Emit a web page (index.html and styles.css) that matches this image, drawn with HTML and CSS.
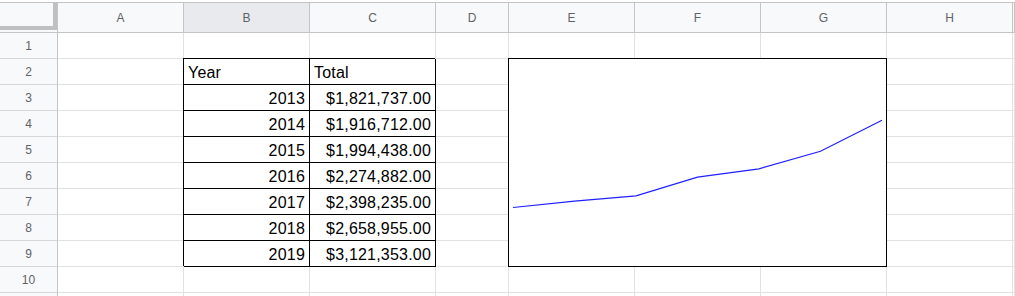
FILE: index.html
```html
<!DOCTYPE html>
<html lang="en">
<head>
    <meta charset="UTF-8">
    <title>Sheet - Totals by Year</title>
    <link rel="stylesheet" href="styles.css">
</head>
<body>
    <div class="sheet">
        <div class="row head">
            <div class="corner"><div class="freeze"></div></div>
            <div class="cell">A</div>
            <div class="cell selected">B</div>
            <div class="cell">C</div>
            <div class="cell narrow">D</div>
            <div class="cell">E</div>
            <div class="cell">F</div>
            <div class="cell">G</div>
            <div class="cell">H</div>
            <div class="cell rest"></div>
        </div>

        <div class="row">
            <div class="rh">1</div>
            <div class="cell"></div><div class="cell"></div><div class="cell"></div><div class="cell narrow"></div>
            <div class="cell"></div><div class="cell"></div><div class="cell"></div><div class="cell"></div><div class="cell rest"></div>
        </div>
        <div class="row">
            <div class="rh">2</div>
            <div class="cell"></div>
            <div class="cell data">Year</div>
            <div class="cell data">Total</div>
            <div class="cell narrow"></div>
            <div class="cell"></div><div class="cell"></div><div class="cell"></div><div class="cell"></div><div class="cell rest"></div>
        </div>
        <div class="row">
            <div class="rh">3</div>
            <div class="cell"></div>
            <div class="cell data num">2013</div>
            <div class="cell data num">$1,821,737.00</div>
            <div class="cell narrow"></div>
            <div class="cell"></div><div class="cell"></div><div class="cell"></div><div class="cell"></div><div class="cell rest"></div>
        </div>
        <div class="row">
            <div class="rh">4</div>
            <div class="cell"></div>
            <div class="cell data num">2014</div>
            <div class="cell data num">$1,916,712.00</div>
            <div class="cell narrow"></div>
            <div class="cell"></div><div class="cell"></div><div class="cell"></div><div class="cell"></div><div class="cell rest"></div>
        </div>
        <div class="row">
            <div class="rh">5</div>
            <div class="cell"></div>
            <div class="cell data num">2015</div>
            <div class="cell data num">$1,994,438.00</div>
            <div class="cell narrow"></div>
            <div class="cell"></div><div class="cell"></div><div class="cell"></div><div class="cell"></div><div class="cell rest"></div>
        </div>
        <div class="row">
            <div class="rh">6</div>
            <div class="cell"></div>
            <div class="cell data num">2016</div>
            <div class="cell data num">$2,274,882.00</div>
            <div class="cell narrow"></div>
            <div class="cell"></div><div class="cell"></div><div class="cell"></div><div class="cell"></div><div class="cell rest"></div>
        </div>
        <div class="row">
            <div class="rh">7</div>
            <div class="cell"></div>
            <div class="cell data num">2017</div>
            <div class="cell data num">$2,398,235.00</div>
            <div class="cell narrow"></div>
            <div class="cell"></div><div class="cell"></div><div class="cell"></div><div class="cell"></div><div class="cell rest"></div>
        </div>
        <div class="row">
            <div class="rh">8</div>
            <div class="cell"></div>
            <div class="cell data num">2018</div>
            <div class="cell data num">$2,658,955.00</div>
            <div class="cell narrow"></div>
            <div class="cell"></div><div class="cell"></div><div class="cell"></div><div class="cell"></div><div class="cell rest"></div>
        </div>
        <div class="row">
            <div class="rh">9</div>
            <div class="cell"></div>
            <div class="cell data num">2019</div>
            <div class="cell data num">$3,121,353.00</div>
            <div class="cell narrow"></div>
            <div class="cell"></div><div class="cell"></div><div class="cell"></div><div class="cell"></div><div class="cell rest"></div>
        </div>
        <div class="row">
            <div class="rh">10</div>
            <div class="cell"></div><div class="cell"></div><div class="cell"></div><div class="cell narrow"></div>
            <div class="cell"></div><div class="cell"></div><div class="cell"></div><div class="cell"></div><div class="cell rest"></div>
        </div>
        <div class="row">
            <div class="rh"></div>
            <div class="cell"></div><div class="cell"></div><div class="cell"></div><div class="cell narrow"></div>
            <div class="cell"></div><div class="cell"></div><div class="cell"></div><div class="cell"></div><div class="cell rest"></div>
        </div>

        <!-- floating chart object -->
        <div class="chart">
            <svg width="377" height="207" viewBox="0 0 377 207">
                <polyline points="4,148.5 65.5,142.1 127,136.9 188.5,118.1 250,109.8 311.5,92.3 373,61.3"
                          fill="none" stroke="#2020ff" stroke-width="1.2"/>
            </svg>
        </div>
    </div>
</body>
</html>
```

FILE: styles.css
```css
body {
    margin: 0;
    font-family: "Liberation Sans", Arial, sans-serif;
    background-color: #fff;
    overflow: hidden;
}
.sheet {
    position: relative;
    margin-top: 2px;
    border-top: 1px solid #c4c4c4;
}
.row {
    display: flex;
    height: 26px;
}
.row.head {
    height: 30px;
}
.cell, .rh, .corner {
    box-sizing: border-box;
    flex: none;
    width: 126px;
    height: 100%;
    border-right: 1px solid #e2e2e2;
    border-bottom: 1px solid #e2e2e2;
}
.cell.narrow {
    width: 73px;
}
.cell.rest {
    flex: 1;
}
.head .cell {
    display: flex;
    align-items: center;
    justify-content: center;
    background-color: #f8f9fa;
    border-color: #c4c4c4;
    color: #5f6368;
    font-size: 12px;
}
.head .cell.selected {
    background-color: #e8eaed;
}
.corner {
    width: 58px;
    background-color: #f8f9fa;
    border-color: #c4c4c4;
}
.freeze {
    box-sizing: border-box;
    width: 57px;
    height: 27px;
    border-right: 4px solid #c0c0c0;
    border-bottom: 4px solid #c0c0c0;
}
.rh {
    width: 58px;
    display: flex;
    align-items: center;
    justify-content: center;
    background-color: #f8f9fa;
    border-right-color: #c4c4c4;
    border-bottom-color: #d6d6d6;
    color: #5f6368;
    font-size: 12px;
}
.data {
    display: flex;
    align-items: center;
    padding: 2px 4px 0;
    border-color: #000;
    box-shadow: -1px -1px 0 #000;
    color: #000;
    font-size: 16px;
    letter-spacing: 0.2px;
}
.data.num {
    justify-content: flex-end;
}
.chart {
    position: absolute;
    left: 508px;
    top: 55px;
    box-sizing: border-box;
    width: 379px;
    height: 209px;
    background-color: #fff;
    border: 1px solid #000;
}
.chart svg {
    display: block;
}
```
